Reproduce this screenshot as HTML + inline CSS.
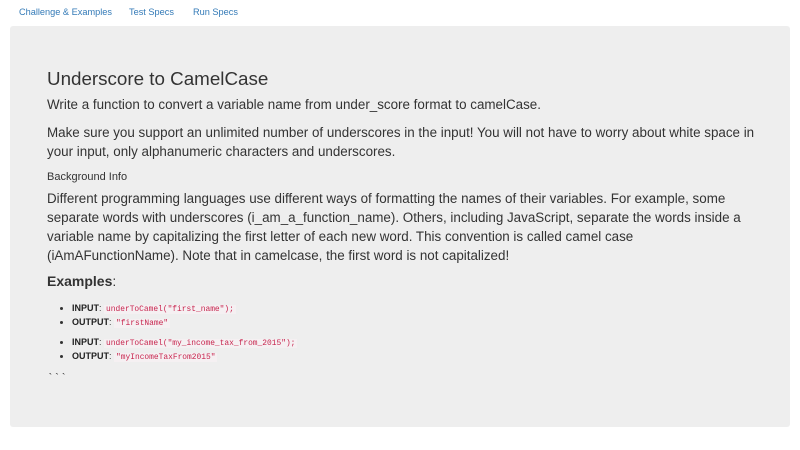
<!DOCTYPE html>
<html><head><meta charset="utf-8"><style>
body{margin:0;background:#fff;font-family:"Liberation Sans",sans-serif;color:#333;width:800px;height:450px;overflow:hidden;position:relative}
.nav{position:absolute;top:7px;left:19px;font-size:9.2px;color:#337ab7}
.nav span{position:absolute;white-space:nowrap}
.panel{position:absolute;left:10px;top:26px;width:780px;height:401px;background:#eee;border-radius:3px}
.c{position:absolute;left:37px;top:0;width:740px;height:400px}
h1{font-size:18.8px;font-weight:normal;margin:0;position:absolute;top:42px;white-space:nowrap}
p{margin:0;font-size:13.4px;line-height:19px;position:absolute;white-space:nowrap}
.bi{font-size:11px}
h3{position:absolute;top:247px;font-size:14px;margin:0}
ul{position:absolute;left:0;margin:0;padding-left:25px;font-size:9px;line-height:14px;list-style:disc}
code{font-family:"Liberation Mono",monospace;font-size:7.9px;line-height:10px;color:#c7254e;background:#f5f0f2;padding:0 2px}
b{font-weight:bold;color:#222}
.bt{position:absolute;top:347px;left:0;font-size:11px;line-height:12px;color:#333;font-family:"Liberation Mono",monospace}
</style></head><body>
<div class="nav"><span style="left:0">Challenge &amp; Examples</span><span style="left:110px">Test Specs</span><span style="left:174px">Run Specs</span></div>
<div class="panel"><div class="c">
<h1>Underscore to CamelCase</h1>
<p style="top:69px">Write a function to convert a variable name from under_score format to camelCase.</p>
<p style="top:97px">Make sure you support an unlimited number of underscores in the input! You will not have to worry about white space in<br>your input, only alphanumeric characters and underscores.</p>
<p class="bi" style="top:142px">Background Info</p>
<p style="top:163px">Different programming languages use different ways of formatting the names of their variables. For example, some<br>separate words with underscores (i_am_a_function_name). Others, including JavaScript, separate the words inside a<br>variable name by capitalizing the first letter of each new word. This convention is called camel case<br>(iAmAFunctionName). Note that in camelcase, the first word is not capitalized!</p>
<h3>Examples<span style="font-weight:normal">:</span></h3>
<ul style="top:275px"><li><b>INPUT</b>: <code>underToCamel("first_name");</code></li><li><b>OUTPUT</b>: <code>"firstName"</code></li></ul>
<ul style="top:309px"><li><b>INPUT</b>: <code>underToCamel("my_income_tax_from_2015");</code></li><li><b>OUTPUT</b>: <code>"myIncomeTaxFrom2015"</code></li></ul>
<div class="bt">&#96;&#96;&#96;</div>
</div></div>
</body></html>
